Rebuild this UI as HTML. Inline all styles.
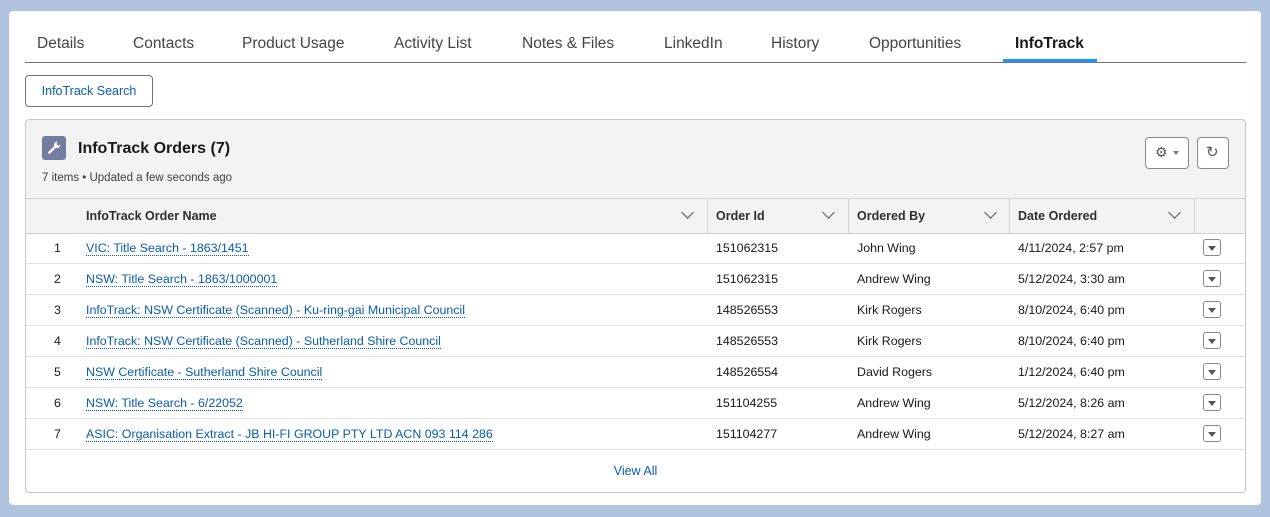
<!DOCTYPE html><html><head><style>
body{margin:0;width:1270px;height:517px;background:#b0c4df;font-family:"Liberation Sans",sans-serif;overflow:hidden;position:relative}
.card{position:absolute;left:9px;top:11px;width:1252px;height:494px;background:#fff;border-radius:4px}
.tab{position:absolute;top:35px;font-size:15.5px;color:#444}
.tabline{position:absolute;left:25px;top:62px;width:1221px;height:1px;background:#747474}
.btn{position:absolute;left:25px;top:75px;width:126px;height:30px;border:1px solid #747474;border-radius:4px;color:#0b5cab;font-size:12.5px;line-height:30px;text-align:center}
.panel{position:absolute;left:25px;top:119px;width:1219px;height:372px;border:1px solid #c9c9c9;border-radius:4px;background:#fff;overflow:hidden}
.phead{position:absolute;left:0;top:0;width:1219px;height:78px;background:#f3f3f3}
.ico{position:absolute;left:16px;top:16px;width:24px;height:24px;background:#747ca0;border-radius:3px}
.ttl{position:absolute;left:52px;top:20px;font-size:16px;font-weight:bold;color:#181818}
.sub{position:absolute;left:16px;top:52px;font-size:11.5px;color:#3e3e3c}
.sbtn{position:absolute;top:17px;height:30px;border:1px solid #8a8a8a;border-radius:4px;background:#fff}
.hdr{position:absolute;left:0;top:78px;width:1219px;height:34px;background:#f3f3f3;border-top:1px solid #d0d0d0;border-bottom:1px solid #d0d0d0}
.h{position:absolute;top:10px;font-size:12.5px;font-weight:bold;color:#2e2e2e}
.chev{position:absolute;top:9px;width:8px;height:8px;border-right:1.5px solid #555;border-bottom:1.5px solid #555;transform:rotate(45deg)}
.vl{position:absolute;top:0;width:1px;height:34px;background:#d0d0d0}
.row{position:absolute;left:0;width:1219px;height:30px;border-bottom:1px solid #e0e0e0;font-size:12.4px;color:#181818}
.row span{position:absolute;top:8px}
.row a{color:#0b5cab;text-decoration:none;border-bottom:1px dotted #0b5cab}
.dd{position:absolute;left:1177px;top:6px;width:18px;height:17px;border:1px solid #8a8a8a;border-radius:3px;box-sizing:border-box}
.dd:after{content:"";position:absolute;left:4px;top:6px;border-left:4px solid transparent;border-right:4px solid transparent;border-top:5px solid #555}
.va{position:absolute;left:0;top:344px;width:1219px;text-align:center;font-size:12.5px;color:#0b5cab}
</style></head><body>
<div class="card"></div>
<div class="tab" style="left:37px">Details</div>
<div class="tab" style="left:133px">Contacts</div>
<div class="tab" style="left:242px">Product Usage</div>
<div class="tab" style="left:394px">Activity List</div>
<div class="tab" style="left:522px">Notes &amp; Files</div>
<div class="tab" style="left:664px">LinkedIn</div>
<div class="tab" style="left:771px">History</div>
<div class="tab" style="left:869px">Opportunities</div>
<div class="tab" style="left:1015px;font-weight:bold;color:#181818">InfoTrack</div>
<div class="tabline"></div>
<div style="position:absolute;left:1003px;top:59px;width:94px;height:3px;background:#1b96ff"></div>
<div class="btn">InfoTrack Search</div>
<div class="panel">
<div class="phead">
<div class="ico"><svg width="24" height="24" viewBox="0 0 24 24"><path d="M15.5 5.5a3.5 3.5 0 0 0-3.3 4.6L6.5 15.8a1.2 1.2 0 0 0 1.7 1.7l5.7-5.7a3.5 3.5 0 0 0 4.6-3.3l-2 1.5-2-2z" fill="#fff"/></svg></div>
<div class="ttl">InfoTrack Orders (7)</div>
<div class="sub">7 items • Updated a few seconds ago</div>
<div class="sbtn" style="left:1119px;width:42px"><span style="position:absolute;left:9px;top:6px;font-size:14px;color:#555">⚙</span><span style="position:absolute;left:27px;top:13px;border-left:3px solid transparent;border-right:3px solid transparent;border-top:4px solid #777"></span></div>
<div class="sbtn" style="left:1171px;width:30px"><span style="position:absolute;left:8px;top:5px;font-size:15px;color:#555">↻</span></div>
</div>
<div class="hdr">
<div class="h" style="left:60px">InfoTrack Order Name</div><div class="chev" style="left:657px"></div><div class="vl" style="left:681px"></div>
<div class="h" style="left:690px">Order Id</div><div class="chev" style="left:798px"></div><div class="vl" style="left:822px"></div>
<div class="h" style="left:831px">Ordered By</div><div class="chev" style="left:960px"></div><div class="vl" style="left:983px"></div>
<div class="h" style="left:992px">Date Ordered</div><div class="chev" style="left:1144px"></div><div class="vl" style="left:1168px"></div>
</div>
<div class="row" style="top:113px"><span style="left:28px">1</span><span style="left:60px"><a>VIC: Title Search - 1863/1451</a></span><span style="left:690px">151062315</span><span style="left:831px">John Wing</span><span style="left:992px">4/11/2024, 2:57 pm</span><div class="dd"></div></div>
<div class="row" style="top:144px"><span style="left:28px">2</span><span style="left:60px"><a>NSW: Title Search - 1863/1000001</a></span><span style="left:690px">151062315</span><span style="left:831px">Andrew Wing</span><span style="left:992px">5/12/2024, 3:30 am</span><div class="dd"></div></div>
<div class="row" style="top:175px"><span style="left:28px">3</span><span style="left:60px"><a>InfoTrack: NSW Certificate (Scanned) - Ku-ring-gai Municipal Council</a></span><span style="left:690px">148526553</span><span style="left:831px">Kirk Rogers</span><span style="left:992px">8/10/2024, 6:40 pm</span><div class="dd"></div></div>
<div class="row" style="top:206px"><span style="left:28px">4</span><span style="left:60px"><a>InfoTrack: NSW Certificate (Scanned) - Sutherland Shire Council</a></span><span style="left:690px">148526553</span><span style="left:831px">Kirk Rogers</span><span style="left:992px">8/10/2024, 6:40 pm</span><div class="dd"></div></div>
<div class="row" style="top:237px"><span style="left:28px">5</span><span style="left:60px"><a>NSW Certificate - Sutherland Shire Council</a></span><span style="left:690px">148526554</span><span style="left:831px">David Rogers</span><span style="left:992px">1/12/2024, 6:40 pm</span><div class="dd"></div></div>
<div class="row" style="top:268px"><span style="left:28px">6</span><span style="left:60px"><a>NSW: Title Search - 6/22052</a></span><span style="left:690px">151104255</span><span style="left:831px">Andrew Wing</span><span style="left:992px">5/12/2024, 8:26 am</span><div class="dd"></div></div>
<div class="row" style="top:299px"><span style="left:28px">7</span><span style="left:60px"><a>ASIC: Organisation Extract - JB HI-FI GROUP PTY LTD ACN 093 114 286</a></span><span style="left:690px">151104277</span><span style="left:831px">Andrew Wing</span><span style="left:992px">5/12/2024, 8:27 am</span><div class="dd"></div></div>
<div class="va">View All</div>
</div>
</body></html>
